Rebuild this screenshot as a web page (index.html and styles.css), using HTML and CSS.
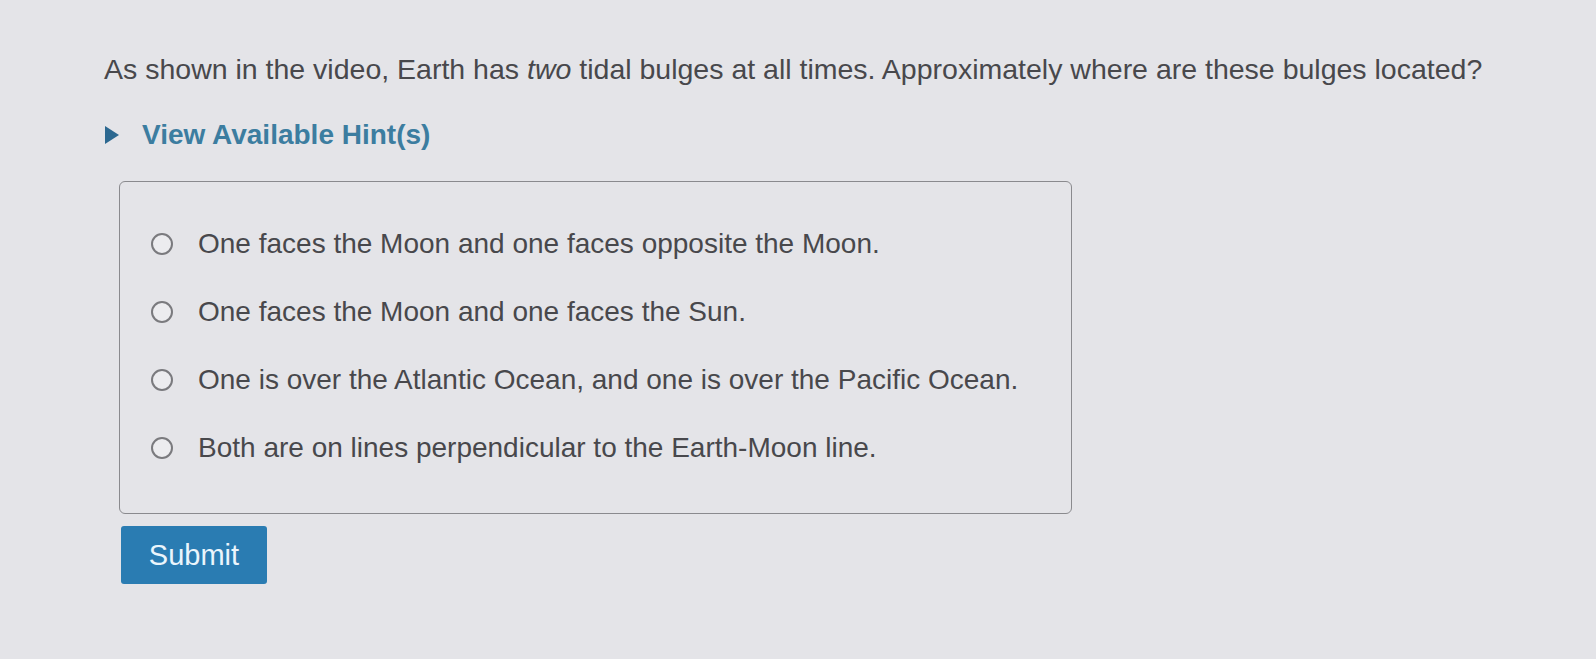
FILE: index.html
```html
<!DOCTYPE html>
<html lang="en">
<head>
  <meta charset="UTF-8">
  <title>Tidal bulges</title>
  <link rel="stylesheet" href="styles.css">
</head>
<body>

<div class="page">
  <p class="question">As shown in the video, Earth has <em>two</em> tidal bulges at all times. Approximately where are these bulges located?</p>

  <div class="hint">
    <svg class="hint-arrow" width="16" height="20" viewBox="0 0 16 20">
      <polygon points="1,1 15,10 1,19" fill="#2c6890"/>
    </svg>
    <span>View Available Hint(s)</span>
  </div>

  <div class="choices">
    <label class="choice"><span class="radio"></span>One faces the Moon and one faces opposite the Moon.</label>
    <label class="choice"><span class="radio"></span>One faces the Moon and one faces the Sun.</label>
    <label class="choice"><span class="radio"></span>One is over the Atlantic Ocean, and one is over the Pacific Ocean.</label>
    <label class="choice"><span class="radio"></span>Both are on lines perpendicular to the Earth-Moon line.</label>
  </div>

  <button class="submit">Submit</button>
</div>

</body>
</html>
```

FILE: styles.css
```css
body {
  margin: 0;
  padding: 0;
  min-height: 100vh;
  background: #e4e4e8;
  font-family: "Liberation Sans", Arial, sans-serif;
  color: #48484c;
}

.page {
  padding: 53px 0 0 104px;
}

.question {
  margin: 0;
  font-size: 28.5px;
  line-height: 32px;
  white-space: nowrap;
}

.hint {
  display: flex;
  align-items: center;
  margin-top: 34px;
  height: 32px;
  font-size: 28px;
  font-weight: bold;
  color: #3c7da0;
}

.hint-arrow {
  margin-right: 22px;
}

.choices {
  box-sizing: border-box;
  width: 953px;
  margin: 30px 0 0 15px;
  padding: 28px 31px 31px;
  border: 1px solid #8a8a8e;
  border-radius: 6px;
}

.choice {
  display: flex;
  align-items: center;
  height: 68px;
  font-size: 28px;
  cursor: pointer;
}

.radio {
  box-sizing: border-box;
  width: 22px;
  height: 22px;
  margin-right: 25px;
  border: 2px solid #7a7a7e;
  border-radius: 50%;
  background: #ececef;
  flex-shrink: 0;
}

.submit {
  display: block;
  width: 146px;
  height: 58px;
  margin: 12px 0 0 17px;
  background-color: #2a7cb2;
  color: #eaf5fc;
  border: none;
  border-radius: 3px;
  font-family: "Liberation Sans", Arial, sans-serif;
  font-size: 29px;
  cursor: pointer;
}
```
